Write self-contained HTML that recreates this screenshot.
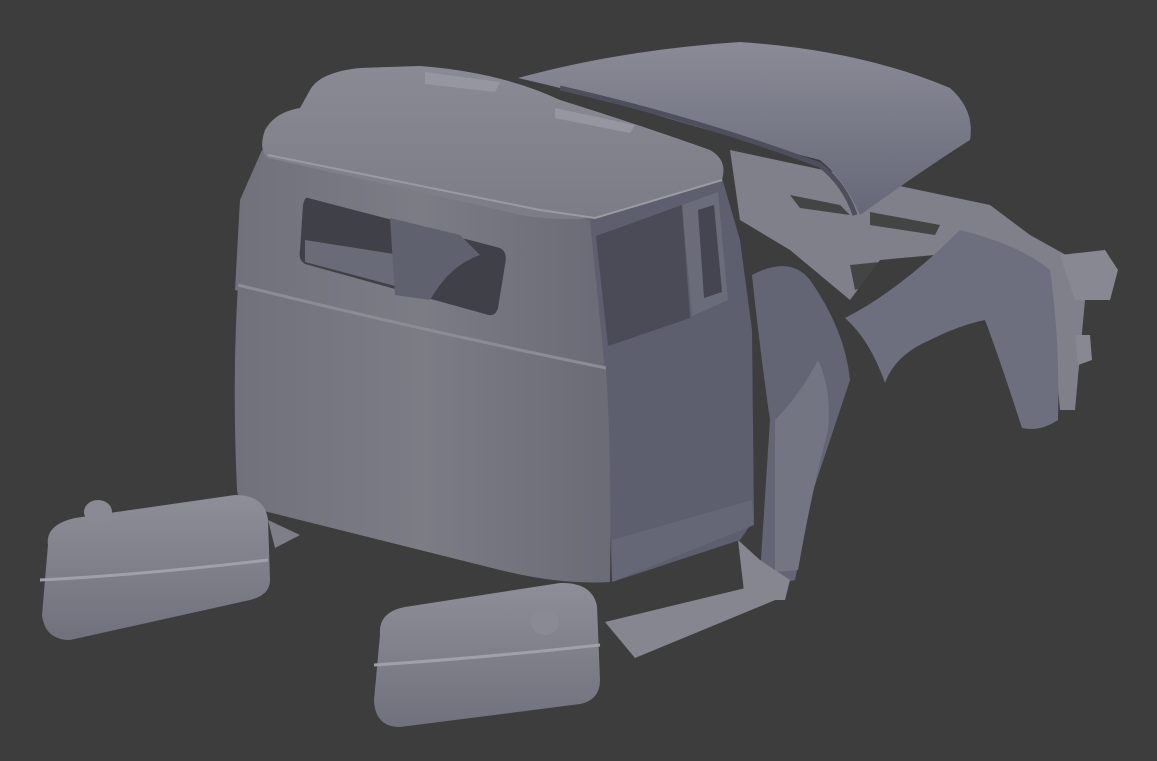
<!DOCTYPE html>
<html><head><style>html,body{margin:0;padding:0;background:#3d3d3d;overflow:hidden}svg{display:block}</style></head>
<body>
<svg width="1157" height="761" viewBox="0 0 1157 761" xmlns="http://www.w3.org/2000/svg">
<defs>
<linearGradient id="back" x1="0" y1="0" x2="1" y2="0"><stop offset="0" stop-color="#70717a"/><stop offset="0.5" stop-color="#7c7c85"/><stop offset="1" stop-color="#6a6b76"/></linearGradient>
<linearGradient id="roof" x1="0" y1="0" x2="0" y2="1"><stop offset="0" stop-color="#8a8a94"/><stop offset="1" stop-color="#7c7c86"/></linearGradient>
<linearGradient id="hood" x1="0" y1="0" x2="0" y2="1"><stop offset="0" stop-color="#8a8b96"/><stop offset="1" stop-color="#666878"/></linearGradient>
<linearGradient id="tank" x1="0" y1="0" x2="0" y2="1"><stop offset="0" stop-color="#8e8e98"/><stop offset="1" stop-color="#70717c"/></linearGradient>
</defs>
<rect width="1157" height="761" fill="#3d3d3d"/>
<!-- chassis frame -->
<path d="M730 150 L800 165 L990 205 L1030 235 L1075 260 L1085 300 L1075 410 L1060 410 L1050 300 L990 250 L880 260 L850 300 L790 250 L740 220 Z" fill="#7f8089"/>
<path d="M790 195 L840 205 L850 215 L800 208 Z M870 212 L940 225 L935 235 L870 225 Z M850 265 L880 262 L870 285 L855 290 Z" fill="#3d3d3d" opacity="0.9"/>
<path d="M1060 255 L1105 250 L1118 270 L1110 300 L1075 300 Z" fill="#888892"/>
<path d="M1075 335 L1090 335 L1092 360 L1078 365 Z" fill="#888892"/>
<!-- hood -->
<path d="M518 78 Q620 50 740 42 Q860 50 950 88 Q975 110 970 140 Q930 165 860 215 Q845 180 820 160 Q740 140 640 110 Q580 92 518 78 Z" fill="url(#hood)"/>
<path d="M560 88 Q700 120 820 165 Q845 185 855 215" stroke="#4d4f5c" stroke-width="5" fill="none"/>
<!-- right fender -->
<path d="M845 318 Q900 290 960 230 Q1020 245 1050 270 Q1060 340 1058 420 Q1040 432 1022 428 Q1000 360 985 320 Q960 325 930 340 Q895 355 885 383 Q870 340 845 318 Z" fill="#6d6f7e"/>
<!-- front fender near cab -->
<path d="M752 275 Q790 255 810 280 Q845 330 850 380 Q830 440 810 500 L795 580 Q775 585 760 575 L770 420 Q760 350 752 275 Z" fill="#63647380"/>
<path d="M752 275 Q790 255 810 280 Q845 330 850 380 Q830 440 810 500 L795 580 Q775 585 760 575 L770 420 Q760 350 752 275 Z" fill="#646574"/>
<path d="M775 420 Q800 395 818 360 Q832 390 828 430 Q812 490 798 570 L775 572 Z" fill="#747583"/>
<!-- step -->
<path d="M738 540 L760 560 L790 580 L785 600 L745 600 Z" fill="#858690"/>
<path d="M605 622 L770 582 L785 596 L635 658 Z" fill="#858690"/>
<!-- door side -->
<path d="M585 215 L722 178 L740 240 L752 330 L754 520 L740 540 L612 582 L605 370 Z" fill="#5d5e6e"/>
<path d="M596 236 L682 205 L690 318 L608 346 Z" fill="#4a4b56"/>
<path d="M682 205 L718 192 L728 300 L692 316 Z" fill="#6b6c79"/>
<path d="M698 210 L714 205 L722 292 L704 298 Z" fill="#444550"/>
<path d="M612 540 L752 500 L754 525 L612 582 Z" fill="#666776"/>
<!-- back upper wall -->
<path d="M262 150 L590 220 L605 370 L235 290 L240 200 Z" fill="url(#back)"/>
<!-- window -->
<path d="M308 198 L500 248 Q508 252 505 265 L498 308 Q495 318 485 314 L305 264 Q298 260 300 250 L303 205 Q305 196 308 198 Z" fill="#3f4048"/>
<path d="M305 240 L400 255 L410 290 L305 262 Z" fill="#6a6b78"/>
<path d="M390 218 L395 295 L430 300 Q450 265 480 255 L460 235 Z" fill="#60616e"/>
<!-- back lower panel -->
<path d="M238 285 Q420 330 606 368 Q612 460 610 582 Q560 585 500 570 L260 510 Q238 505 237 490 Q232 380 238 285 Z" fill="url(#back)"/>
<path d="M238 285 Q420 330 606 368" stroke="#8c8c95" stroke-width="3" fill="none"/>
<!-- roof -->
<path d="M265 130 Q275 112 300 108 L310 90 Q320 72 360 68 L420 66 Q500 72 560 100 Q640 125 710 150 Q728 160 722 180 L595 218 Q540 222 500 210 L268 158 Q258 150 265 130 Z" fill="url(#roof)"/>
<path d="M268 155 L540 210 L595 218 L722 180" stroke="#9a9aa3" stroke-width="2" fill="none"/>
<path d="M425 72 L500 82 L495 92 L425 84 Z" fill="#9696a0"/>
<path d="M555 108 L635 125 L630 133 L555 118 Z" fill="#9696a0"/>
<!-- tank left -->
<path d="M48 545 Q45 525 75 518 L235 495 Q265 495 268 520 L270 580 Q270 595 250 600 L70 640 Q45 640 42 615 Z" fill="url(#tank)"/>
<path d="M40 580 Q140 575 268 560" stroke="#a0a0a8" stroke-width="3" fill="none"/>
<path d="M268 520 L300 535 L275 548 Z" fill="#7d7e88"/>
<ellipse cx="98" cy="512" rx="14" ry="12" fill="#8a8a94"/>
<!-- tank right -->
<path d="M380 635 Q378 612 405 607 L560 583 Q592 582 597 606 L600 680 Q600 700 580 704 L400 727 Q375 727 374 700 Z" fill="url(#tank)"/>
<path d="M374 665 Q480 658 600 645" stroke="#a0a0a8" stroke-width="3" fill="none"/>
<ellipse cx="545" cy="622" rx="14" ry="13" fill="#8a8a94"/>
</svg>
</body></html>
